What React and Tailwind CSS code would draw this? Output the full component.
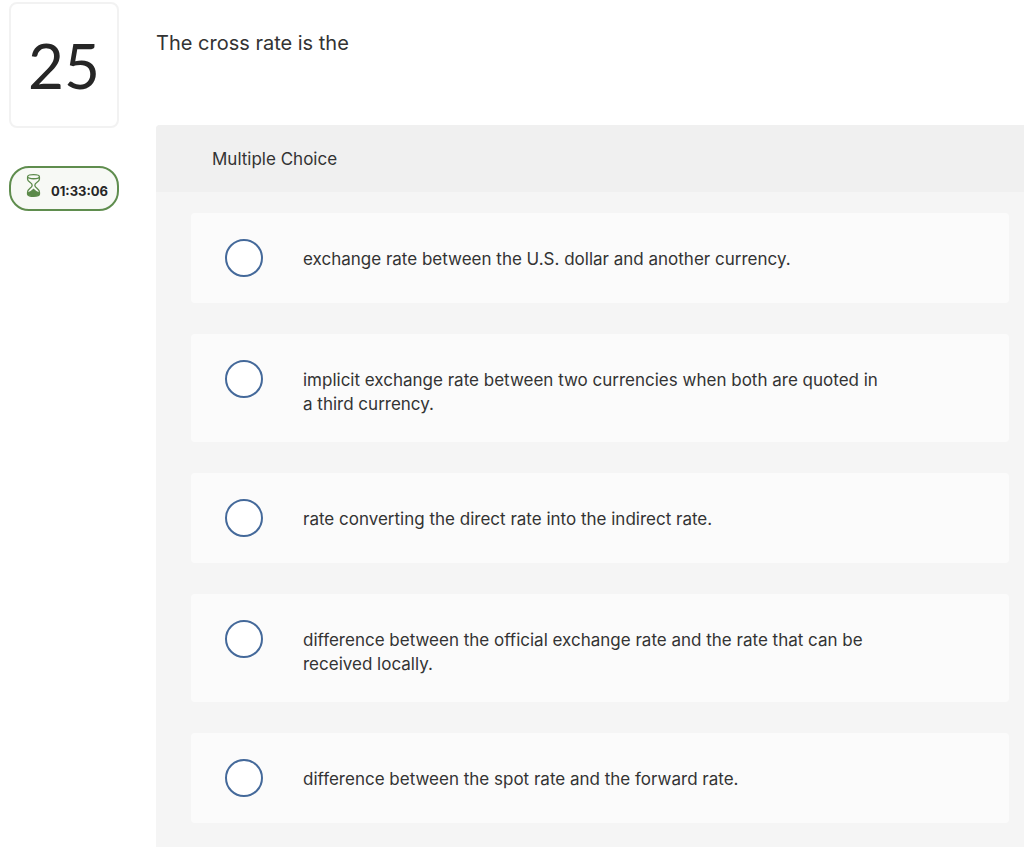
import React, { useState } from 'react'

const QUESTION = {
  number: 25,
  text: 'The cross rate is the',
  type: 'Multiple Choice',
  options: [
    'exchange rate between the U.S. dollar and another currency.',
    'implicit exchange rate between two currencies when both are quoted in a third currency.',
    'rate converting the direct rate into the indirect rate.',
    'difference between the official exchange rate and the rate that can be received locally.',
    'difference between the spot rate and the forward rate.',
  ],
}

function Hourglass() {
  return (
    <svg width="15" height="25" viewBox="0 0 16 26" fill="none" stroke="#5b8a4a" strokeWidth="1.4" aria-hidden="true">
      <ellipse cx="8" cy="3.6" rx="6.3" ry="2.2" />
      <path d="M1.7 3.8v2.4c0 3.2 4.9 3.6 4.9 6.6 0 3-4.9 3.6-4.9 7.2v2.2" />
      <path d="M14.3 3.8v2.4c0 3.2-4.9 3.6-4.9 6.6 0 3 4.9 3.6 4.9 7.2v2.2" />
      <path d="M1.7 21.2c2.4-.6 4.4-2 6.3-4 1.9 2 3.9 3.4 6.3 4v1.2c0 1.3-2.8 2.1-6.3 2.1s-6.3-.8-6.3-2.1z" fill="#5b8a4a" />
    </svg>
  )
}

// ── Question number and time left
function Sidebar({ number, time }) {
  return (
    <aside className="w-[110px] shrink-0">
      <div className="h-[126px] flex items-center justify-center rounded-lg border-2 border-[#f2f2f2] font-['Lato',sans-serif] text-[62px] text-[#262626]">
        {number}
      </div>
      <div className="mt-[38px] h-[45px] flex items-center justify-between px-[15px] pr-[9px] rounded-[20px] border-2 border-[#5f8d4e] bg-[#f7f9f5]">
        <div className="pb-1.5">
          <Hourglass />
        </div>
        <span className="pt-1.5 text-[13px] font-bold text-[#262626]">{time}</span>
      </div>
    </aside>
  )
}

// ── One answer row
function Option({ id, text, checked, onSelect }) {
  return (
    <div className="flex items-start gap-10 py-[26px] pl-[34px] pr-[120px] rounded bg-[#fbfbfb]">
      <input
        type="radio"
        name="answer"
        id={id}
        checked={checked}
        onChange={onSelect}
        className="appearance-none w-[38px] h-[38px] shrink-0 rounded-full border-2 border-[#44699a] bg-white cursor-pointer checked:bg-[#44699a]"
      />
      <label htmlFor={id} className="pt-2 text-[17px] leading-6 cursor-pointer">
        {text}
      </label>
    </div>
  )
}

export default function App() {
  const [selected, setSelected] = useState(null)

  return (
    <div className="min-h-screen flex items-start gap-[37px] pl-[9px] pt-0.5 bg-white font-['Inter',sans-serif] text-[#333333]">
      <Sidebar number={QUESTION.number} time="01:33:06" />

      <main className="flex-1 min-w-0">
        <h1 id="question" className="pt-[26px] pb-[67px] text-xl leading-[30px]">{QUESTION.text}</h1>

        <section className="rounded-tl bg-[#f5f5f5]">
          <h2 className="pt-[22px] pb-[21px] pl-14 rounded-tl bg-[#f0f0f0] text-[17px] leading-6">{QUESTION.type}</h2>

          <div role="radiogroup" aria-labelledby="question" className="flex flex-col gap-[31px] pt-[21px] pb-6 pl-[35px] pr-[15px]">
            {QUESTION.options.map((text, i) => (
              <Option
                key={i}
                id={`option-${i}`}
                text={text}
                checked={selected === i}
                onSelect={() => setSelected(i)}
              />
            ))}
          </div>
        </section>
      </main>
    </div>
  )
}
